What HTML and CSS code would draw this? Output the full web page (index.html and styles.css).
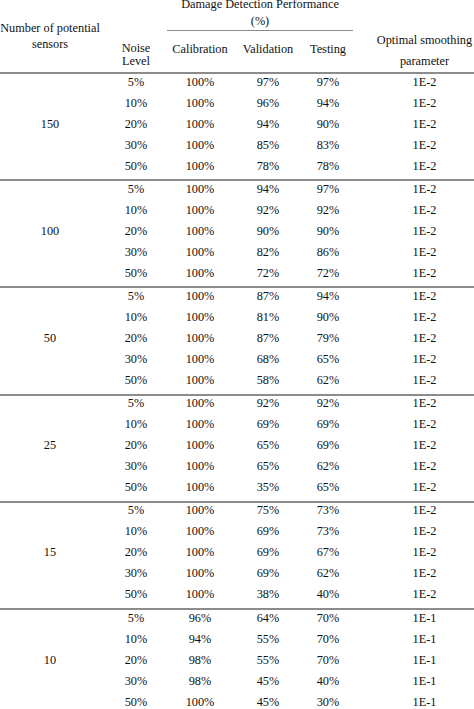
FILE: index.html
```html
<!DOCTYPE html>
<html lang="en">
<head>
<meta charset="utf-8">
<title>Damage detection performance</title>
<link rel="stylesheet" href="styles.css">
</head>
<body>
<table class="results">
  <colgroup>
    <col class="c-sensors">
    <col class="c-noise">
    <col class="c-cal">
    <col class="c-val">
    <col class="c-test">
    <col class="c-opt">
  </colgroup>
  <thead>
    <tr class="h1">
      <th rowspan="2" class="h-sensors">Number of potential<br>sensors</th>
      <th rowspan="2" class="h-noise">Noise<br>Level</th>
      <th colspan="3" class="h-perf">Damage Detection Performance<br>(%)</th>
      <th rowspan="2" class="h-opt">Optimal smoothing<br>parameter</th>
    </tr>
    <tr class="h2">
      <th class="h-sub">Calibration</th>
      <th class="h-sub">Validation</th>
      <th class="h-sub">Testing</th>
    </tr>
  </thead>
  <tbody>
    <tr class="first"><td rowspan="5" class="grp">150</td><td class="noise">5%</td><td>100%</td><td>97%</td><td>97%</td><td class="opt">1E-2</td></tr>
    <tr><td class="noise">10%</td><td>100%</td><td>96%</td><td>94%</td><td class="opt">1E-2</td></tr>
    <tr><td class="noise">20%</td><td>100%</td><td>94%</td><td>90%</td><td class="opt">1E-2</td></tr>
    <tr><td class="noise">30%</td><td>100%</td><td>85%</td><td>83%</td><td class="opt">1E-2</td></tr>
    <tr><td class="noise">50%</td><td>100%</td><td>78%</td><td>78%</td><td class="opt">1E-2</td></tr>

    <tr class="first"><td rowspan="5" class="grp">100</td><td class="noise">5%</td><td>100%</td><td>94%</td><td>97%</td><td class="opt">1E-2</td></tr>
    <tr><td class="noise">10%</td><td>100%</td><td>92%</td><td>92%</td><td class="opt">1E-2</td></tr>
    <tr><td class="noise">20%</td><td>100%</td><td>90%</td><td>90%</td><td class="opt">1E-2</td></tr>
    <tr><td class="noise">30%</td><td>100%</td><td>82%</td><td>86%</td><td class="opt">1E-2</td></tr>
    <tr><td class="noise">50%</td><td>100%</td><td>72%</td><td>72%</td><td class="opt">1E-2</td></tr>

    <tr class="first"><td rowspan="5" class="grp">50</td><td class="noise">5%</td><td>100%</td><td>87%</td><td>94%</td><td class="opt">1E-2</td></tr>
    <tr><td class="noise">10%</td><td>100%</td><td>81%</td><td>90%</td><td class="opt">1E-2</td></tr>
    <tr><td class="noise">20%</td><td>100%</td><td>87%</td><td>79%</td><td class="opt">1E-2</td></tr>
    <tr><td class="noise">30%</td><td>100%</td><td>68%</td><td>65%</td><td class="opt">1E-2</td></tr>
    <tr><td class="noise">50%</td><td>100%</td><td>58%</td><td>62%</td><td class="opt">1E-2</td></tr>

    <tr class="first"><td rowspan="5" class="grp">25</td><td class="noise">5%</td><td>100%</td><td>92%</td><td>92%</td><td class="opt">1E-2</td></tr>
    <tr><td class="noise">10%</td><td>100%</td><td>69%</td><td>69%</td><td class="opt">1E-2</td></tr>
    <tr><td class="noise">20%</td><td>100%</td><td>65%</td><td>69%</td><td class="opt">1E-2</td></tr>
    <tr><td class="noise">30%</td><td>100%</td><td>65%</td><td>62%</td><td class="opt">1E-2</td></tr>
    <tr><td class="noise">50%</td><td>100%</td><td>35%</td><td>65%</td><td class="opt">1E-2</td></tr>

    <tr class="first"><td rowspan="5" class="grp">15</td><td class="noise">5%</td><td>100%</td><td>75%</td><td>73%</td><td class="opt">1E-2</td></tr>
    <tr><td class="noise">10%</td><td>100%</td><td>69%</td><td>73%</td><td class="opt">1E-2</td></tr>
    <tr><td class="noise">20%</td><td>100%</td><td>69%</td><td>67%</td><td class="opt">1E-2</td></tr>
    <tr><td class="noise">30%</td><td>100%</td><td>69%</td><td>62%</td><td class="opt">1E-2</td></tr>
    <tr><td class="noise">50%</td><td>100%</td><td>38%</td><td>40%</td><td class="opt">1E-2</td></tr>

    <tr class="first"><td rowspan="5" class="grp">10</td><td class="noise">5%</td><td>96%</td><td>64%</td><td>70%</td><td class="opt">1E-1</td></tr>
    <tr><td class="noise">10%</td><td>94%</td><td>55%</td><td>70%</td><td class="opt">1E-1</td></tr>
    <tr><td class="noise">20%</td><td>98%</td><td>55%</td><td>70%</td><td class="opt">1E-1</td></tr>
    <tr><td class="noise">30%</td><td>98%</td><td>45%</td><td>40%</td><td class="opt">1E-1</td></tr>
    <tr><td class="noise">50%</td><td>100%</td><td>45%</td><td>30%</td><td class="opt">1E-1</td></tr>
  </tbody>
</table>
</body>
</html>
```

FILE: styles.css
```css
html, body {
  margin: 0;
  padding: 0;
  background: #ffffff;
}

body {
  font-family: "Liberation Serif", "Times New Roman", serif;
  font-size: 12.3px;
  color: #111111;
  overflow: hidden;
}

.results {
  width: 474px;
  table-layout: fixed;
  border-collapse: separate;
  border-spacing: 0;
  margin-top: -4px;
}

.c-sensors { width: 100px; }
.c-noise { width: 67px; }
.c-cal { width: 66px; }
.c-val { width: 70px; }
.c-test { width: 50px; }
.c-opt { width: 121px; }

.results th,
.results td {
  padding: 0;
  text-align: center;
  font-weight: normal;
  white-space: nowrap;
}

/* header */
.results .h1 { height: 35px; }
.results .h2 { height: 43px; }

.results th.h-perf {
  vertical-align: top;
  line-height: 17px;
  border-bottom: 1px solid #8c8c8c;
}

.results th.h-sensors {
  vertical-align: top;
  line-height: 16px;
  padding-top: 24px;
  border-bottom: 2px solid #8c8c8c;
}

.results th.h-noise {
  vertical-align: top;
  line-height: 13px;
  padding-top: 46px;
  padding-left: 5px;
  border-bottom: 2px solid #8c8c8c;
}

.results th.h-opt {
  vertical-align: top;
  line-height: 21px;
  padding-top: 34px;
  padding-left: 22px;
  border-bottom: 2px solid #8c8c8c;
}

.results th.h-sub {
  vertical-align: middle;
  line-height: 14px;
  padding-bottom: 6px;
  border-bottom: 2px solid #8c8c8c;
}

/* body */
.results tbody tr { height: 21px; }
.results tbody tr.first { height: 23.2px; }
.results tbody tr:first-child { height: 21.2px; }

.results tbody td {
  vertical-align: middle;
  line-height: 14px;
  padding-bottom: 6px;
}

.results tbody tr.first td {
  border-top: 2px solid #8c8c8c;
}

.results tbody tr:first-child td {
  border-top: none;
}

.results tbody td.noise { padding-left: 5px; }
.results tbody td.opt { padding-left: 22px; }
```
